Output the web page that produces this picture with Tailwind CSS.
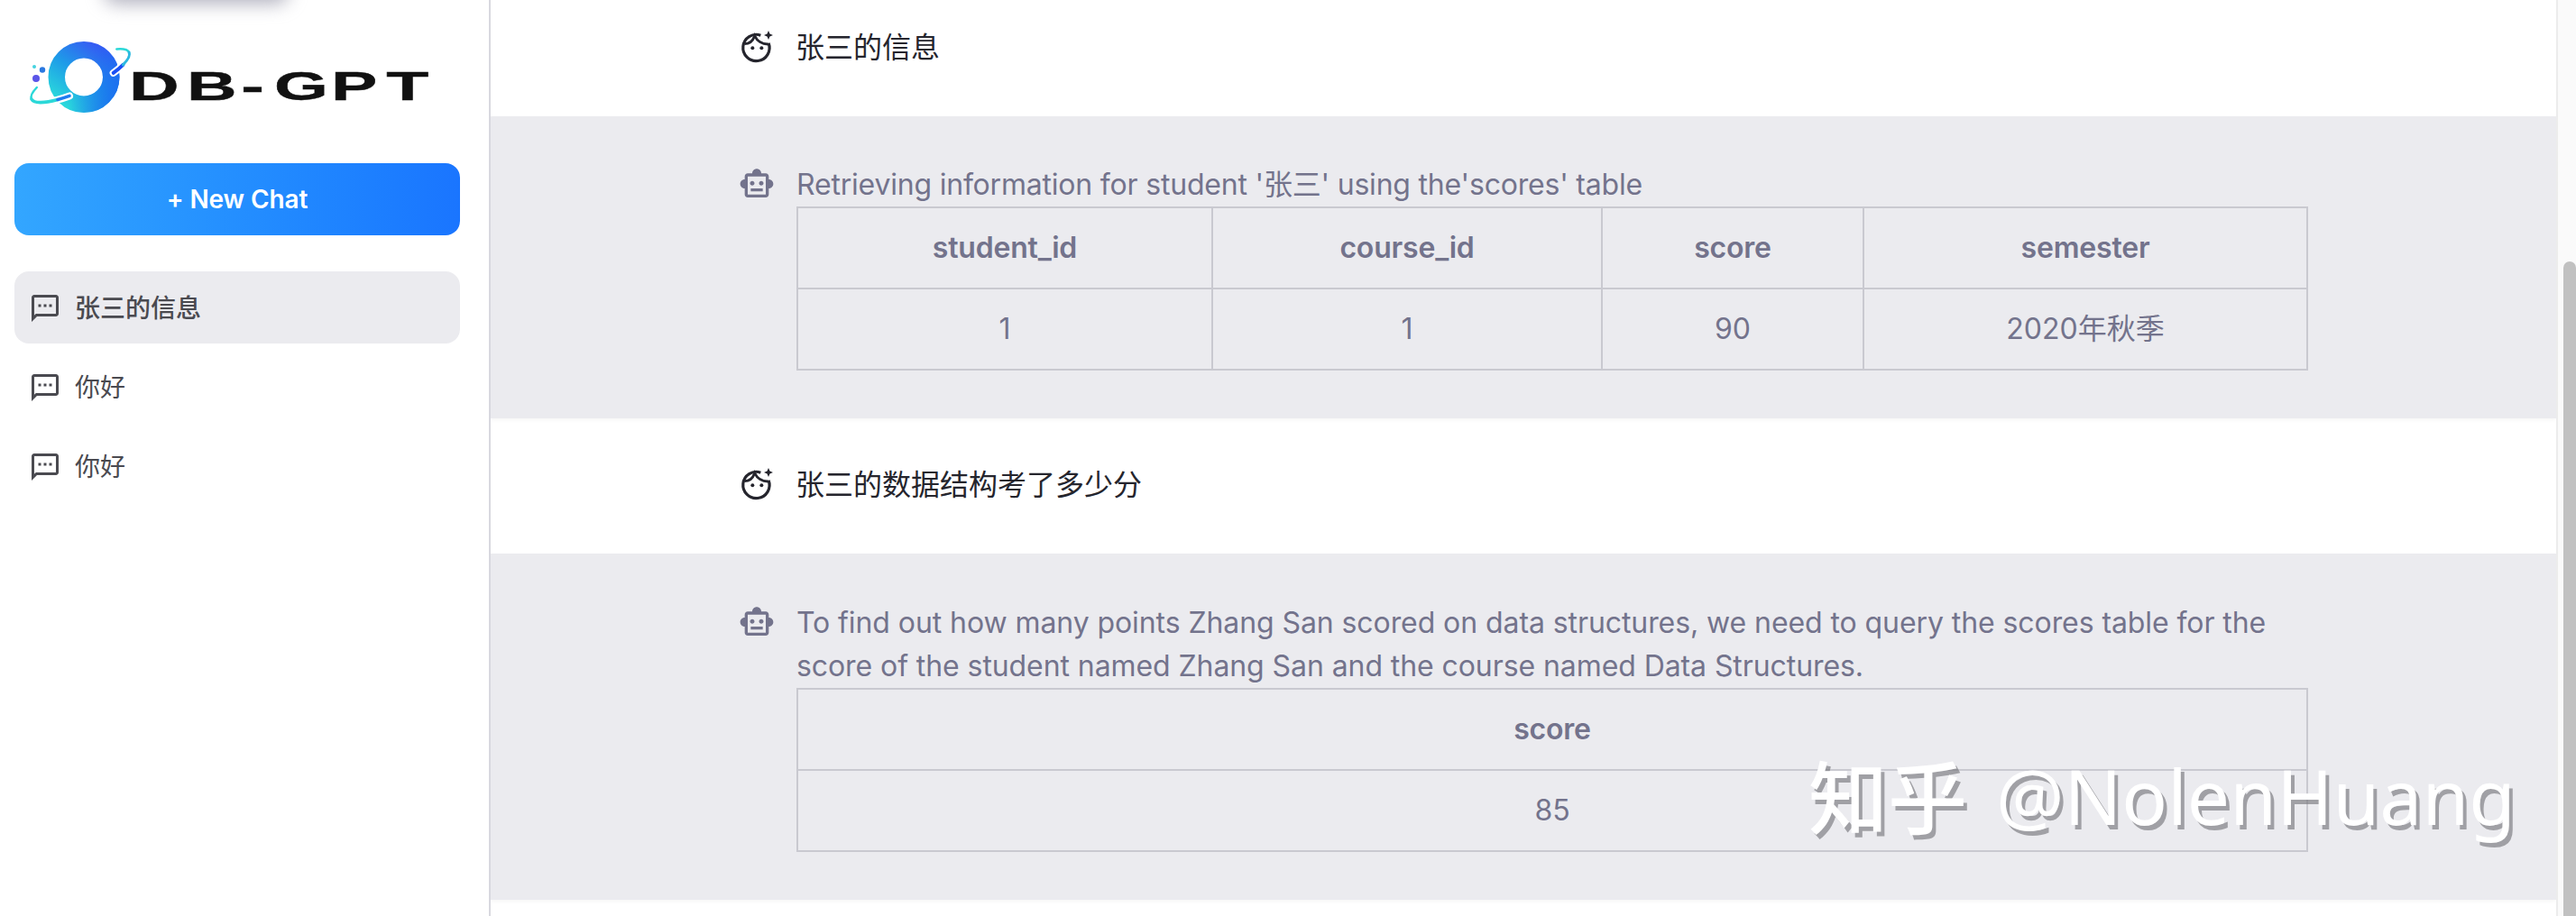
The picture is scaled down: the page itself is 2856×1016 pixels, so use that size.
<!DOCTYPE html>
<html>
<head>
<meta charset="utf-8">
<script src="https://cdn.jsdelivr.net/npm/@tailwindcss/browser@4"></script>
</head>
<body class="font-[Inter,'Noto_Sans_CJK_SC',sans-serif]">
<div class="relative flex h-[1016px] w-[2856px] overflow-hidden bg-white">

  <!-- sidebar -->
  <aside class="relative w-[544px] shrink-0 border-r-2 border-[#d8d8df] bg-white pl-4 pr-[32px]">
    <div class="absolute -top-[24px] left-[115px] h-[28px] w-[205px] rounded-full bg-[#8f8fa3]/70 blur-[10px]"></div>
    <svg class="-ml-4 mt-[36px] block" width="500" height="100" viewBox="0 36 500 100">
      <defs>
        <linearGradient id="donut" gradientUnits="userSpaceOnUse" x1="125" y1="55" x2="75" y2="125">
          <stop offset="0" stop-color="#3b4ff5"/>
          <stop offset="0.5" stop-color="#1e9be8"/>
          <stop offset="1" stop-color="#2be0da"/>
        </linearGradient>
        <linearGradient id="donut2" gradientUnits="userSpaceOnUse" x1="85" y1="95" x2="130" y2="112">
          <stop offset="0" stop-color="#1a6ff0" stop-opacity="0"/>
          <stop offset="1" stop-color="#1a6ff0"/>
        </linearGradient>
      </defs>
      <circle cx="93" cy="85.5" r="30.25" fill="none" stroke="url(#donut)" stroke-width="18.5"/>
      <circle cx="93" cy="85.5" r="30.25" fill="none" stroke="url(#donut2)" stroke-width="18.5"/>
      <g transform="rotate(-25.7 89 84)" fill="none" stroke-linecap="round">
        <path d="M29 84A60 16 0 0 0 68.5 99" stroke="#fff" stroke-width="8"/>
        <path d="M123.4 97.1A60 16 0 0 0 149 84" stroke="#fff" stroke-width="8"/>
        <path d="M29 84A60 16 0 0 1 39.9 74.8" stroke="#2bd8d8" stroke-width="2.5"/>
        <path d="M138.1 74.8A60 16 0 0 1 149 84" stroke="#2bd8d8" stroke-width="2.5"/>
        <path d="M29 84A60 16 0 0 0 55 97" stroke="#2bd8d8" stroke-width="3.5"/>
        <path d="M55 97A60 16 0 0 0 68.5 99" stroke="#1f7cf0" stroke-width="3.5"/>
        <path d="M123.4 97.1A60 16 0 0 0 137 93.6" stroke="#1a4ff5" stroke-width="4"/>
        <path d="M137 93.6A60 16 0 0 0 149 84" stroke="#2bb8e0" stroke-width="3"/>
      </g>
      <circle cx="40" cy="87" r="4" fill="#5a55e8"/>
      <circle cx="47" cy="77.5" r="3.2" fill="#2a78e0"/>
      <circle cx="38" cy="74" r="2" fill="#45d3e0"/>
      <text transform="translate(143 111) scale(1.75 1)" x="0 36.6 71 92 128 163" y="0" font-family="Liberation Sans" font-weight="700" font-size="44" fill="#111" stroke="#111" stroke-width="0.4">DB-GPT</text>
    </svg>
    <button class="mt-[45px] flex h-[80px] w-full items-center justify-center rounded-2xl bg-gradient-to-r from-[#33a6ff] to-[#1a75ff] text-[28px] font-semibold tracking-[-0.1px] text-white">+ New Chat</button>
    <nav class="mt-10 flex flex-col gap-2 text-[28px] text-[#4a4a50]">
      <div class="flex h-[80px] items-center gap-[15px] rounded-2xl bg-[#ebebef] px-4 pt-[1px] font-medium">
        <svg width="36" height="36" viewBox="0 0 24 24" fill="currentColor"><path d="M20 2H4c-1.1 0-1.99.9-1.99 2L2 22l4-4h14c1.1 0 2-.9 2-2V4c0-1.1-.9-2-2-2zm0 14H5.17L4 17.17V4h16v12zM7 9h2v2H7zm4 0h2v2h-2zm4 0h2v2h-2z"/></svg>
        <span>张三的信息</span>
      </div>
      <div class="flex h-[80px] items-center gap-[15px] rounded-2xl px-4 pt-[1px]">
        <svg width="36" height="36" viewBox="0 0 24 24" fill="currentColor"><path d="M20 2H4c-1.1 0-1.99.9-1.99 2L2 22l4-4h14c1.1 0 2-.9 2-2V4c0-1.1-.9-2-2-2zm0 14H5.17L4 17.17V4h16v12zM7 9h2v2H7zm4 0h2v2h-2zm4 0h2v2h-2z"/></svg>
        <span>你好</span>
      </div>
      <div class="flex h-[80px] items-center gap-[15px] rounded-2xl px-4 pt-[1px]">
        <svg width="36" height="36" viewBox="0 0 24 24" fill="currentColor"><path d="M20 2H4c-1.1 0-1.99.9-1.99 2L2 22l4-4h14c1.1 0 2-.9 2-2V4c0-1.1-.9-2-2-2zm0 14H5.17L4 17.17V4h16v12zM7 9h2v2H7zm4 0h2v2h-2zm4 0h2v2h-2z"/></svg>
        <span>你好</span>
      </div>
    </nav>
  </aside>

  <!-- chat -->
  <main class="-mt-[21px] w-[2290px] shrink-0 text-[32px] leading-[48px]">
    <section class="h-[150px] pt-[50px]">
      <div class="mx-auto flex w-[1740px] gap-6 text-[#25252d]">
        <svg class="mt-[3px] shrink-0" width="40" height="40" viewBox="0 0 24 24" fill="none" stroke="currentColor" stroke-width="1.9"><path d="M19.9 9.5A8.8 8.8 0 1 1 14.6 4.3"/><path d="M3.9 10c3 0 5.5-2 6.7-5.4 1.6 3.4 5 5.8 9.2 5.6" stroke-width="1.7"/><circle cx="9.2" cy="12.8" r="1.2" fill="currentColor" stroke="none"/><circle cx="15.2" cy="12.8" r="1.2" fill="currentColor" stroke="none"/><path d="M19.8 1.2l.9 2.1 2.1.9-2.1.9-.9 2.1-.9-2.1-2.1-.9 2.1-.9z" fill="currentColor" stroke="none"/></svg>
        <div class="-ml-[1px]">张三的信息</div>
      </div>
    </section>
    <section class="h-[335px] bg-[#ebebef] pt-[52px] shadow-[0_2px_4px_rgba(0,0,0,0.04)]">
      <div class="mx-auto flex w-[1740px] gap-6 text-[#73738c]">
        <svg class="mt-[3px] shrink-0" width="40" height="40" viewBox="0 0 24 24" fill="currentColor"><path d="M20 9V7c0-1.1-.9-2-2-2h-3c0-1.66-1.34-3-3-3S9 3.34 9 5H6c-1.1 0-2 .9-2 2v2c-1.66 0-3 1.34-3 3s1.34 3 3 3v4c0 1.1.9 2 2 2h12c1.1 0 2-.9 2-2v-4c1.66 0 3-1.34 3-3s-1.34-3-3-3zm-2 10H6V7h12v12zm-9-6c-.83 0-1.5-.67-1.5-1.5S8.17 10 9 10s1.5.67 1.5 1.5S9.83 13 9 13zm7.5-1.5c0 .83-.67 1.5-1.5 1.5s-1.5-.67-1.5-1.5.67-1.5 1.5-1.5 1.5.67 1.5 1.5zM8 15h8v2H8v-2z"/></svg>
        <div class="w-[1676px]">
          <div class="tracking-[-0.2px]">Retrieving information for student '张三' using the'scores' table</div>
          <table class="w-full table-fixed border-collapse text-center">
            <colgroup><col class="w-[460px]"><col class="w-[432px]"><col class="w-[290px]"><col></colgroup>
            <tr class="h-[90px]">
              <th class="border-2 border-[#c9c9d0] font-semibold tracking-[-0.2px]">student_id</th>
              <th class="border-2 border-[#c9c9d0] font-semibold tracking-[-0.2px]">course_id</th>
              <th class="border-2 border-[#c9c9d0] font-semibold tracking-[-0.2px]">score</th>
              <th class="border-2 border-[#c9c9d0] font-semibold tracking-[-0.2px]">semester</th>
            </tr>
            <tr class="h-[90px]">
              <td class="border-2 border-[#c9c9d0]">1</td>
              <td class="border-2 border-[#c9c9d0]">1</td>
              <td class="border-2 border-[#c9c9d0]">90</td>
              <td class="border-2 border-[#c9c9d0]">2020年秋季</td>
            </tr>
          </table>
        </div>
      </div>
    </section>
    <section class="h-[150px] pt-[50px]">
      <div class="mx-auto flex w-[1740px] gap-6 text-[#25252d]">
        <svg class="mt-[3px] shrink-0" width="40" height="40" viewBox="0 0 24 24" fill="none" stroke="currentColor" stroke-width="1.9"><path d="M19.9 9.5A8.8 8.8 0 1 1 14.6 4.3"/><path d="M3.9 10c3 0 5.5-2 6.7-5.4 1.6 3.4 5 5.8 9.2 5.6" stroke-width="1.7"/><circle cx="9.2" cy="12.8" r="1.2" fill="currentColor" stroke="none"/><circle cx="15.2" cy="12.8" r="1.2" fill="currentColor" stroke="none"/><path d="M19.8 1.2l.9 2.1 2.1.9-2.1.9-.9 2.1-.9-2.1-2.1-.9 2.1-.9z" fill="currentColor" stroke="none"/></svg>
        <div class="-ml-[1px]">张三的数据结构考了多少分</div>
      </div>
    </section>
    <section class="h-[384px] bg-[#ebebef] pt-[53px] shadow-[0_2px_4px_rgba(0,0,0,0.04)]">
      <div class="mx-auto flex w-[1740px] gap-6 text-[#73738c]">
        <svg class="mt-[3px] shrink-0" width="40" height="40" viewBox="0 0 24 24" fill="currentColor"><path d="M20 9V7c0-1.1-.9-2-2-2h-3c0-1.66-1.34-3-3-3S9 3.34 9 5H6c-1.1 0-2 .9-2 2v2c-1.66 0-3 1.34-3 3s1.34 3 3 3v4c0 1.1.9 2 2 2h12c1.1 0 2-.9 2-2v-4c1.66 0 3-1.34 3-3s-1.34-3-3-3zm-2 10H6V7h12v12zm-9-6c-.83 0-1.5-.67-1.5-1.5S8.17 10 9 10s1.5.67 1.5 1.5S9.83 13 9 13zm7.5-1.5c0 .83-.67 1.5-1.5 1.5s-1.5-.67-1.5-1.5.67-1.5 1.5-1.5 1.5.67 1.5 1.5zM8 15h8v2H8v-2z"/></svg>
        <div class="w-[1676px]">
          <div class="tracking-[-0.08px]">To find out how many points Zhang San scored on data structures, we need to query the scores table for the score of the student named Zhang San and the course named Data Structures.</div>
          <table class="w-full table-fixed border-collapse text-center">
            <tr class="h-[90px]"><th class="border-2 border-[#c9c9d0] font-semibold tracking-[-0.2px]">score</th></tr>
            <tr class="h-[90px]"><td class="border-2 border-[#c9c9d0]">85</td></tr>
          </table>
        </div>
      </div>
    </section>
  </main>

  <!-- scrollbar -->
  <div class="relative flex-1 border-l-2 border-[#ececec] bg-[#fafafa]">
    <div class="absolute left-[6px] right-0 top-[290px] bottom-0 rounded-t-full bg-[#c1c1c1]"></div>
  </div>

  <!-- watermark -->
  <div class="absolute left-[2005px] top-[815px] flex items-baseline whitespace-nowrap font-['Noto_Sans_CJK_SC',sans-serif] text-[88px] leading-[130px] text-white [text-shadow:4px_5px_0_rgba(120,120,125,0.65)]">
    <span class="font-medium">知乎</span>
    <span class="ml-[32px] -translate-y-[3px] font-['Noto_Sans',sans-serif] text-[84px]">@NolenHuang</span>
  </div>
</div>
</body>
</html>
